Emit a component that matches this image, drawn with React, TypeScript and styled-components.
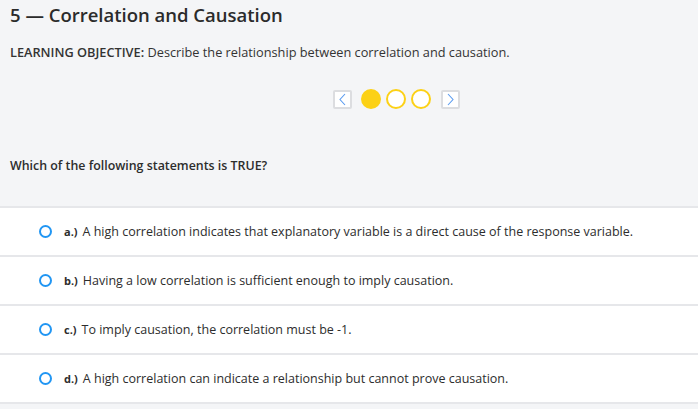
import styled, { createGlobalStyle } from "styled-components";

const GlobalStyle = createGlobalStyle`
  html, body {
    margin: 0;
    padding: 0;
    background: #f4f5f7;
  }
  body {
    font-family: "Open Sans", "Noto Sans", sans-serif;
    color: #2d2d2d;
  }
`

const Page = styled.div`
  width: 698px;
  height: 409px;
  background: #f4f5f7;
  overflow: hidden;
`

const Header = styled.div`
  padding: 3px 10px 0 10px;
`

const Title = styled.h2`
  margin: 0;
  font-size: 18.5px;
  line-height: 24px;
  font-weight: 600;
  color: #2b2b2b;
`

const Objective = styled.p`
  margin: 17px 0 0 0;
  font-size: 12.75px;
  line-height: 16px;
  color: #333;
`

const ObjectiveLabel = styled.span`
  font-weight: 600;
`

const Pager = styled.div`
  display: flex;
  justify-content: center;
  align-items: center;
  margin-top: 29px;
  padding-left: 95px;
  gap: 5px;
`

const ArrowButton = styled.button<{ $side: "left" | "right" }>`
  width: 19px;
  height: 19px;
  padding: 0;
  border: 2px solid #dcdde0;
  border-radius: 2px;
  background: #fff;
  display: flex;
  align-items: center;
  justify-content: center;
  margin: ${(p) => (p.$side === "left" ? "0 4px 0 0" : "0 0 0 5px")};
`

const Dot = styled.span<{ $active?: boolean }>`
  width: 20px;
  height: 20px;
  box-sizing: border-box;
  border-radius: 50%;
  border: 2px solid #fcd116;
  background: ${(p) => (p.$active ? "#fcd116" : "#fff")};
`

const Question = styled.p`
  margin: 49px 0 0 0;
  padding: 0 10px;
  font-size: 12.4px;
  line-height: 16px;
  font-weight: 600;
  color: #2d2d2d;
`

const Options = styled.div`
  margin-top: 32px;
  background: #fff;
  border-top: 2px solid #e6e7ea;
`

const Option = styled.div`
  display: flex;
  align-items: center;
  height: 47px;
  padding-left: 39px;
  border-bottom: 2px solid #e6e7ea;
`

const Radio = styled.span`
  width: 13px;
  height: 13px;
  box-sizing: border-box;
  border: 2px solid #2196f3;
  border-radius: 50%;
  margin-right: 12px;
  flex-shrink: 0;
`

const OptionText = styled.span`
  font-size: 12.5px;
  color: #2d2d2d;
`

const Letter = styled.span`
  font-weight: 700;
  font-size: 11px;
  margin-right: 5px;
`

const Chevron = ({ dir }: { dir: "left" | "right" }) => (
  <svg width="9" height="13" viewBox="0 0 9 13">
    <path
      d={dir === "left" ? "M7 1 L2 6.5 L7 12" : "M2 1 L7 6.5 L2 12"}
      fill="none"
      stroke="#5b9cf0"
      strokeWidth="1.1"
    />
  </svg>
)

const options = [
  { letter: "a.)", text: "A high correlation indicates that explanatory variable is a direct cause of the response variable." },
  { letter: "b.)", text: "Having a low correlation is sufficient enough to imply causation." },
  { letter: "c.)", text: "To imply causation, the correlation must be -1." },
  { letter: "d.)", text: "A high correlation can indicate a relationship but cannot prove causation." },
]

const App = () => {
  return (
    <Page>
      <GlobalStyle />
      <Header>
        <Title>5 — Correlation and Causation</Title>
        <Objective>
          <ObjectiveLabel>LEARNING OBJECTIVE:</ObjectiveLabel> Describe the relationship between correlation and causation.
        </Objective>
      </Header>
      <Pager>
        <ArrowButton $side="left">
          <Chevron dir="left" />
        </ArrowButton>
        <Dot $active />
        <Dot />
        <Dot />
        <ArrowButton $side="right">
          <Chevron dir="right" />
        </ArrowButton>
      </Pager>
      <Question>Which of the following statements is TRUE?</Question>
      <Options>
        {options.map((o) => (
          <Option key={o.letter}>
            <Radio />
            <OptionText>
              <Letter>{o.letter}</Letter>
              {o.text}
            </OptionText>
          </Option>
        ))}
      </Options>
    </Page>
  )
}

export default App;
